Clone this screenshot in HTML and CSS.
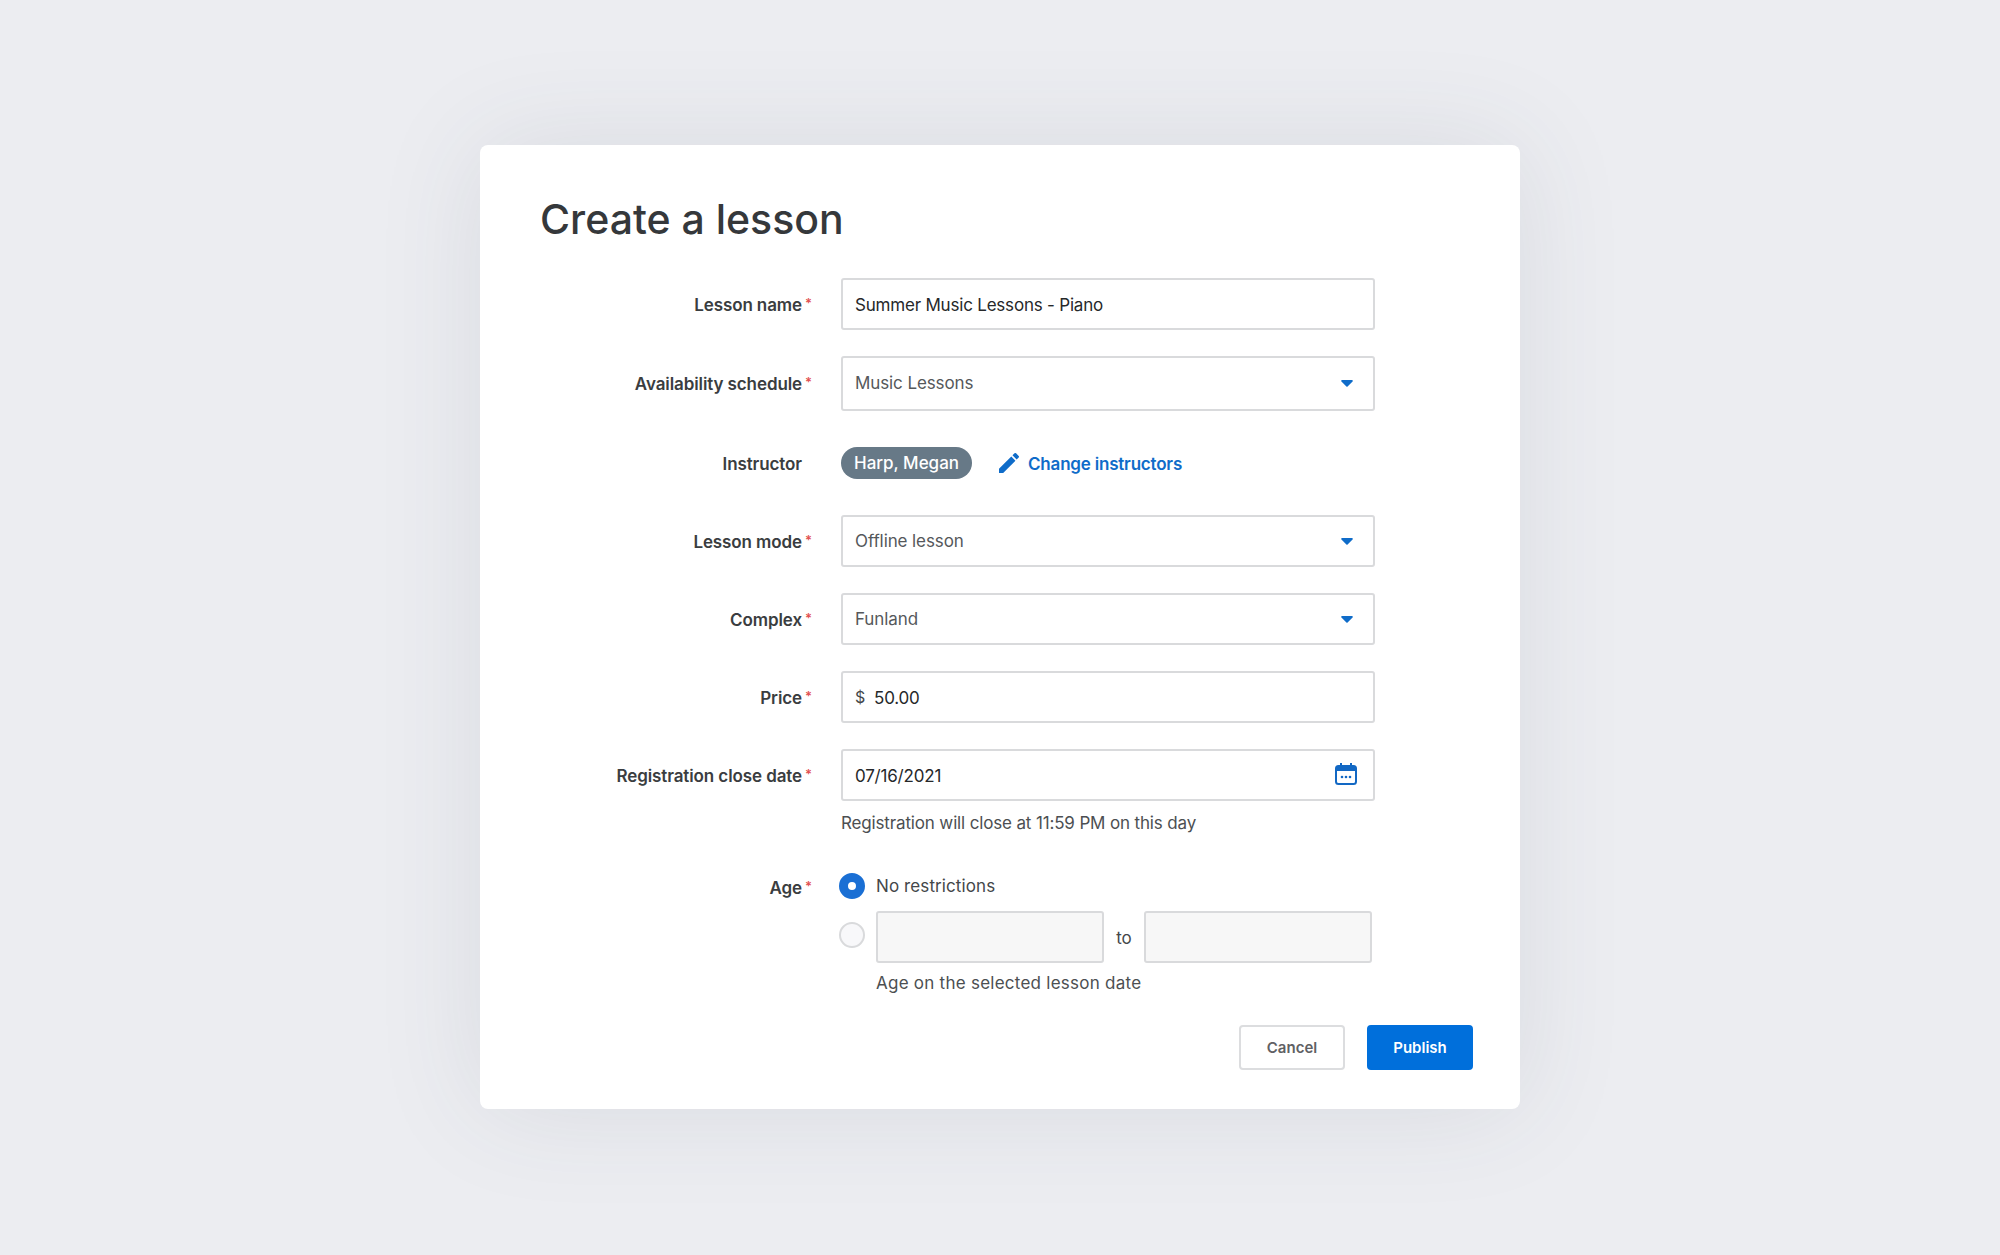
FILE: index.html
```html
<!DOCTYPE html>
<html>
<head>
<title>Create a lesson</title>
<link rel="stylesheet" href="styles.css">
</head>
<body>

<div class='card'>
    <h1 class='title'>Create a lesson</h1>

    <div class='form'>
        <div class='row'>
            <div class='label'>Lesson name<span class='req'>*</span></div>
            <div class='field'><div class='input filled'>Summer Music Lessons - Piano</div></div>
        </div>

        <div class='row'>
            <div class='label'>Availability schedule<span class='req'>*</span></div>
            <div class='field'>
                <div class='input select tall'>Music Lessons
                    <svg class='caret' viewBox='0 0 14 8'><path d='M1.2 0h11.6c.9 0 1.4 1.1.7 1.8L7.7 7.4c-.4.4-1 .4-1.4 0L.5 1.8C-.2 1.1.3 0 1.2 0z'/></svg>
                </div>
            </div>
        </div>

        <div class='row'>
            <div class='label'>Instructor<span class='req'></span></div>
            <div class='field inline'>
                <span class='pill'>Harp, Megan</span>
                <a class='link'>
                    <svg class='pencil' viewBox='3 3 18 18'><path d='M3 17.25V21h3.75L17.81 9.94l-3.75-3.75L3 17.25zM20.71 7.04a1 1 0 0 0 0-1.41l-2.34-2.34a1 1 0 0 0-1.41 0l-1.83 1.83 3.75 3.75 1.83-1.83z'/></svg>
                    <span class='link-text'>Change instructors</span>
                </a>
            </div>
        </div>

        <div class='row'>
            <div class='label'>Lesson mode<span class='req'>*</span></div>
            <div class='field'>
                <div class='input select'>Offline lesson
                    <svg class='caret' viewBox='0 0 14 8'><path d='M1.2 0h11.6c.9 0 1.4 1.1.7 1.8L7.7 7.4c-.4.4-1 .4-1.4 0L.5 1.8C-.2 1.1.3 0 1.2 0z'/></svg>
                </div>
            </div>
        </div>

        <div class='row'>
            <div class='label'>Complex<span class='req'>*</span></div>
            <div class='field'>
                <div class='input select'>Funland
                    <svg class='caret' viewBox='0 0 14 8'><path d='M1.2 0h11.6c.9 0 1.4 1.1.7 1.8L7.7 7.4c-.4.4-1 .4-1.4 0L.5 1.8C-.2 1.1.3 0 1.2 0z'/></svg>
                </div>
            </div>
        </div>

        <div class='row'>
            <div class='label'>Price<span class='req'>*</span></div>
            <div class='field'><div class='input filled'><span class='dollar'>$</span>50.00</div></div>
        </div>

        <div class='row top'>
            <div class='label fixed'>Registration close date<span class='req'>*</span></div>
            <div class='field'>
                <div class='input filled'>07/16/2021
                    <svg class='calendar' viewBox='0 0 22 22'>
                        <rect x='1' y='3' width='20' height='18' rx='2.5' fill='none' stroke='#1268c4' stroke-width='2'/>
                        <rect x='1' y='3' width='20' height='5' fill='#1268c4'/>
                        <rect x='5' y='0' width='2' height='4' fill='#1268c4'/>
                        <rect x='15' y='0' width='2' height='4' fill='#1268c4'/>
                        <circle cx='7' cy='14' r='1.3' fill='#1268c4'/>
                        <circle cx='11' cy='14' r='1.3' fill='#1268c4'/>
                        <circle cx='15' cy='14' r='1.3' fill='#1268c4'/>
                    </svg>
                </div>
                <div class='help'>Registration will close at 11:59 PM on this day</div>
            </div>
        </div>

        <div class='row top age'>
            <div class='label age-label'>Age<span class='req'>*</span></div>
            <div class='field'>
                <div class='radio-row'>
                    <span class='radio on'></span>
                    <span class='radio-text'>No restrictions</span>
                </div>
                <div class='range-row'>
                    <span class='radio lift'></span>
                    <div class='input disabled'></div>
                    <span class='to'>to</span>
                    <div class='input disabled'></div>
                </div>
                <div class='help age-help'>Age on the selected lesson date</div>
            </div>
        </div>
    </div>

    <div class='footer'>
        <div class='btn'>Cancel</div>
        <div class='btn primary'>Publish</div>
    </div>
</div>

</body>
</html>
```

FILE: styles.css
```css
html {
    height: 100%;
}

body {
    margin: 0px;
    height: 1255px;
    box-sizing: border-box;
    padding-top: 145px;
    background: #ecedf1;
    font-family: "Inter", "Liberation Sans", sans-serif;
    font-size: 17px;
    color: #333;
    overflow: hidden;
}

.card {
    box-sizing: border-box;
    width: 1040px;
    height: 964px;
    margin: 0 auto;
    padding: 47px 47px 38px 60px;
    background: #fff;
    border-radius: 8px;
    box-shadow: 0 0 110px rgba(60, 64, 90, 0.1);
}

.title {
    margin: 0 0 32px 0;
    height: 54px;
    line-height: 54px;
    font-size: 41px;
    font-weight: 500;
    color: #35383b;
}

.form {
    display: flex;
    flex-flow: column;
    gap: 26px;
}

.row {
    display: flex;
    align-items: center;
    gap: 29px;
}

.row.top {
    align-items: flex-start;
}

.row.age {
    margin-top: 12px;
}

.label {
    width: 272px;
    flex: none;
    padding-top: 1px;
    text-align: right;
    font-weight: 600;
    letter-spacing: -0.1px;
    color: #3a3d40;
}

.label.fixed {
    line-height: 49px;
}

.label.age-label {
    line-height: 27px;
}

.req {
    display: inline-block;
    width: 10px;
    text-align: right;
    color: #e25050;
    vertical-align: 3px;
    font-size: 13px;
}

.field {
    width: 534px;
}

.field.inline {
    display: flex;
    align-items: center;
    gap: 27px;
    height: 52px;
}

.input {
    box-sizing: border-box;
    display: flex;
    align-items: center;
    height: 52px;
    padding: 0 12px;
    background: #fff;
    border: 2px solid #d9dadc;
    border-radius: 3px;
    color: #55585b;
}

.input.select {
    padding-bottom: 1px;
    letter-spacing: -0.1px;
}

.input.tall {
    height: 55px;
}

.input.filled {
    padding-top: 2px;
    letter-spacing: -0.2px;
    color: #26282a;
}

.input.disabled {
    width: 228px;
    padding: 0;
    background: #f7f7f7;
}

.caret {
    width: 12px;
    height: 7px;
    margin-left: auto;
    margin-right: 8px;
    margin-top: 1px;
    fill: #0f6cc9;
}

.calendar {
    width: 22px;
    height: 22px;
    margin-left: auto;
    margin-right: 4px;
    margin-top: -4px;
}

.dollar {
    margin-right: 9px;
    margin-top: -2px;
    font-size: 16px;
    color: #44474a;
}

.pill {
    display: inline-block;
    height: 32px;
    line-height: 32px;
    padding: 0 13px;
    border-radius: 16px;
    background: #677987;
    color: #fff;
    font-weight: 500;
}

.link {
    display: flex;
    align-items: center;
    gap: 9px;
    color: #0f6cc9;
    font-weight: 600;
}

.link-text {
    padding-top: 1px;
    letter-spacing: -0.2px;
}

.pencil {
    width: 20px;
    height: 20px;
    fill: #0f6cc9;
}

.help {
    margin-top: 11px;
    line-height: 22px;
    letter-spacing: -0.15px;
    color: #4c4f52;
}

.radio-row, .range-row {
    display: flex;
    align-items: center;
    margin-left: -2px;
}

.radio-row {
    height: 26px;
    margin-top: 1px;
    margin-bottom: 12px;
}

.radio {
    box-sizing: border-box;
    flex: none;
    width: 26px;
    height: 26px;
    margin-right: 11px;
    border: 2px solid #d9dadc;
    border-radius: 50%;
    background: #f8f8fa;
}

.radio.on {
    border: 9px solid #1a6fd4;
    background: #fff;
}

.radio.lift {
    margin-top: -5px;
}

.radio-text {
    letter-spacing: 0.1px;
    color: #44474a;
}

.to {
    width: 40px;
    padding-top: 2px;
    text-align: center;
    color: #44474a;
}

.age-help {
    margin-top: 9px;
    margin-left: 35px;
    letter-spacing: 0.25px;
}

.footer {
    display: flex;
    justify-content: flex-end;
    gap: 22px;
    margin-top: 31px;
}

.btn {
    box-sizing: border-box;
    width: 106px;
    height: 45px;
    line-height: 41px;
    text-align: center;
    background: #fff;
    border: 2px solid #dcdddf;
    border-radius: 4px;
    font-size: 15px;
    font-weight: 600;
    color: #5f6164;
}

.btn.primary {
    background: #006fdb;
    border-color: #006fdb;
    color: #fff;
}
```
